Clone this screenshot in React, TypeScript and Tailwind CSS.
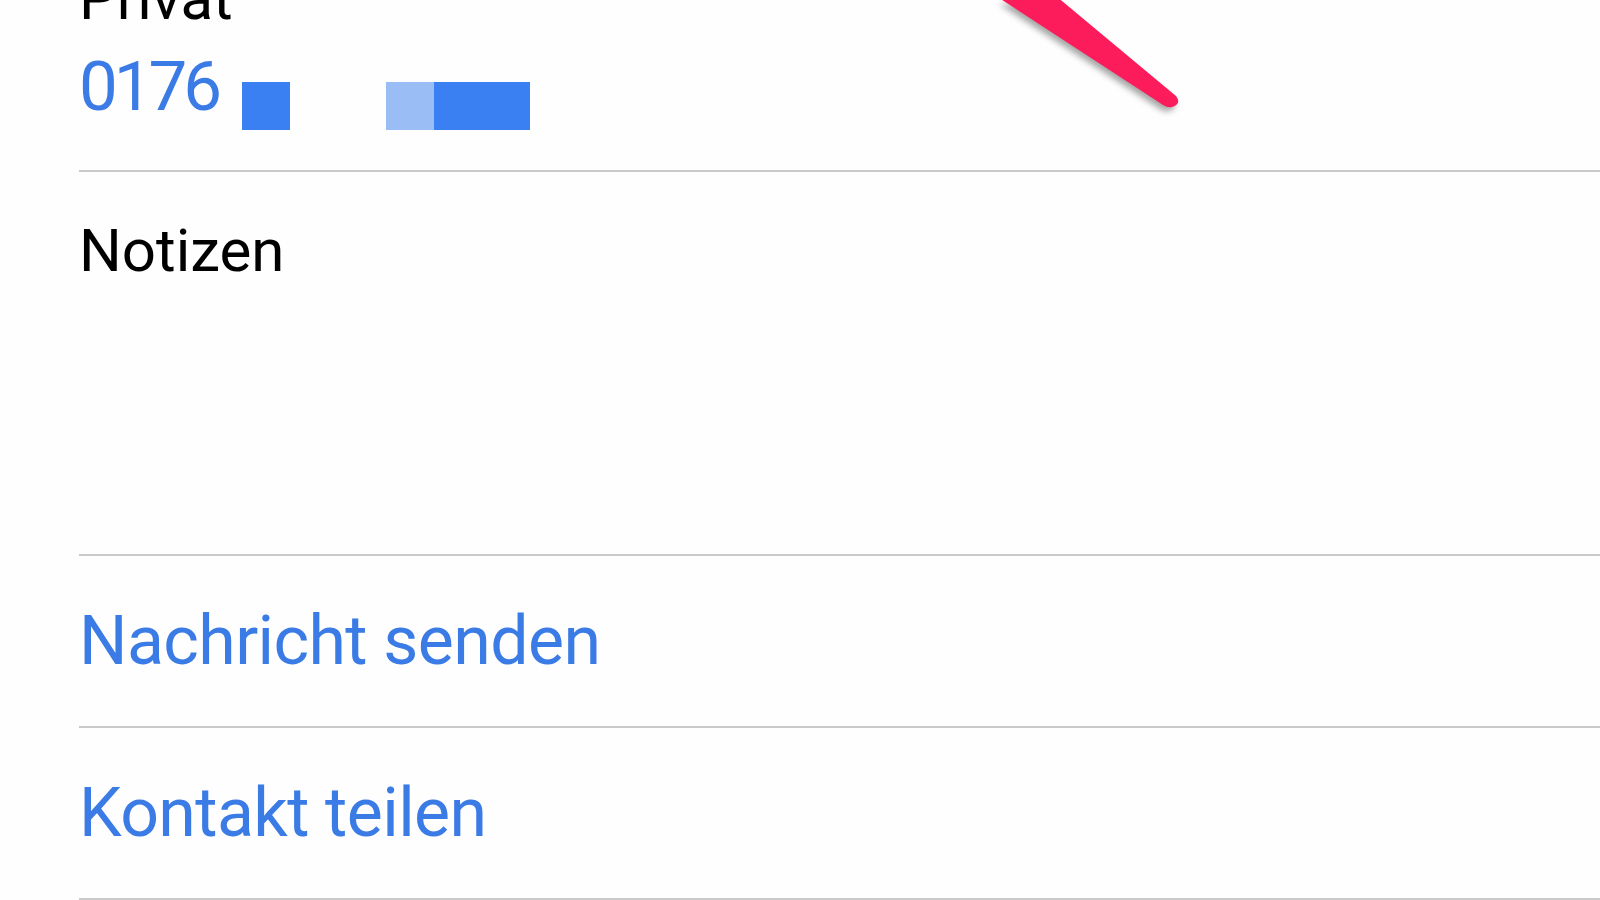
import React from 'react';

const blue = 'text-[#3a7be6]';

// pixelated cells hiding the rest of the phone number
const mosaic = ['bg-[#3b80f3]', 'bg-transparent', 'bg-transparent', 'bg-[#9bbdf6]', 'bg-[#3b80f3]', 'bg-[#3b80f3]'];

function ActionRow({ label }: { label: string }) {
  return (
    <div className="h-[172px] flex items-center border-b-2 border-[#c9c9c9]">
      <div className={`${blue} text-[68px] leading-[70px] tracking-[-0.6px]`}>{label}</div>
    </div>
  );
}

export default function App() {
  return (
    <div className="relative w-[1600px] h-[900px] overflow-hidden bg-[#fefefe]" style={{ fontFamily: 'Roboto, "Liberation Sans", sans-serif' }}>
      <div className="pl-[79px] mt-[-31px]">
        <div className="pb-[40px] border-b-2 border-[#c9c9c9]">
          <div className="text-[60px] leading-[60px] text-black">Privat</div>
          <div className="mt-[23px] flex items-start">
            <div className={`${blue} text-[69px] leading-[70px] tracking-[-4px]`}>0176</div>
            <div className="ml-[24px] mt-[30px] flex">
              {mosaic.map((c, i) => (
                <div key={i} className={`w-[48px] h-[48px] ${c}`} />
              ))}
            </div>
          </div>
        </div>

        <div className="h-[384px] pt-[49px] border-b-2 border-[#c9c9c9]">
          <div className="text-[60px] leading-[60px] text-black">Notizen</div>
        </div>

        <ActionRow label="Nachricht senden" />
        <ActionRow label="Kontakt teilen" />
      </div>

      <svg className="absolute left-0 top-0 pointer-events-none" width="1600" height="900" style={{ filter: 'drop-shadow(-3px 4px 3px rgba(0,0,0,0.35))' }}>
        <path d="M996 -4 L1056 -4 L1176 96 Q1182 104 1172 107 Q1166 108 1160 103 Z" fill="#fc1c5b" />
      </svg>
    </div>
  );
}
